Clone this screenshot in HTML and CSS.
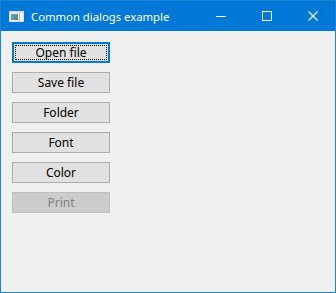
FILE: index.html
```html
<!DOCTYPE html>
<html>
<head>
<meta charset="utf-8">
<link rel="stylesheet" href="styles.css">
</head>
<body>
<div class="window">
  <div class="titlebar">
    <svg class="appicon" width="15" height="11" viewBox="0 0 15 11">
      <rect x="0" y="0" width="15" height="11" fill="#dcdcdc"/>
      <rect x="1" y="2" width="13" height="8" fill="#f4f4f4"/>
      <defs>
        <linearGradient id="g" x1="0" y1="0" x2="1" y2="1">
          <stop offset="0" stop-color="#6fa9c9"/>
          <stop offset="1" stop-color="#3f8a5c"/>
        </linearGradient>
      </defs>
      <rect x="2" y="3" width="7" height="6" fill="url(#g)"/>
      <rect x="10" y="2" width="1" height="8" fill="#b0b0b0"/>
    </svg>
    <span class="title">Common dialogs example</span>
    <div class="controls">
      <div class="ctl">
        <svg width="10" height="10" viewBox="0 0 10 10"><rect x="0" y="5" width="10" height="1" fill="#fff"/></svg>
      </div>
      <div class="ctl">
        <svg width="10" height="10" viewBox="0 0 10 10"><rect x="0.5" y="0.5" width="9" height="9" fill="none" stroke="#fff"/></svg>
      </div>
      <div class="ctl">
        <svg width="10" height="10" viewBox="0 0 10 10"><path d="M0.5 0.5 L9.5 9.5 M9.5 0.5 L0.5 9.5" stroke="#fff" stroke-width="1.1"/></svg>
      </div>
    </div>
  </div>
  <div class="client">
    <button class="btn default"><span class="focus">Open file</span></button>
    <button class="btn">Save file</button>
    <button class="btn">Folder</button>
    <button class="btn">Font</button>
    <button class="btn">Color</button>
    <button class="btn" disabled>Print</button>
  </div>
</div>
</body>
</html>
```
FILE: styles.css
```css
html, body {
  margin: 0;
  padding: 0;
  width: 336px;
  height: 293px;
  overflow: hidden;
}
.window {
  box-sizing: border-box;
  width: 336px;
  height: 293px;
  border: 1px solid #1883d7;
  background: #f0f0f0;
  display: flex;
  flex-direction: column;
  font-family: "Noto Sans", "Open Sans", sans-serif;
}
.titlebar {
  height: 30px;
  background: #0078d7;
  display: flex;
  align-items: center;
  color: #fff;
  flex: none;
}
.appicon {
  margin-left: 8px;
  margin-top: 1px;
}
.title {
  margin-left: 7px;
  font-size: 11.3px;
  margin-top: 1px;
}
.controls {
  margin-left: auto;
  display: flex;
  height: 30px;
}
.ctl {
  width: 46px;
  height: 30px;
  display: flex;
  align-items: center;
  justify-content: center;
}
.ctl:last-child {
  width: 45px;
}
.client {
  flex: 1;
  padding: 11px 0 0 11px;
  display: flex;
  flex-direction: column;
  align-items: flex-start;
  gap: 9px;
}
.btn {
  box-sizing: border-box;
  width: 98px;
  height: 21px;
  margin: 0;
  padding: 0;
  background: #e1e1e1;
  border: 1px solid #adadad;
  font-family: "Noto Sans", "Open Sans", sans-serif;
  font-size: 12px;
  color: #000;
  display: flex;
  align-items: center;
  justify-content: center;
  line-height: 1;
}
.btn.default {
  border: 2px solid #0078d7;
  padding: 1px;
}
.focus {
  box-sizing: border-box;
  width: 100%;
  height: 100%;
  border: 1px dotted #000;
  display: flex;
  align-items: center;
  justify-content: center;
}
.btn:disabled {
  background: #cccccc;
  border-color: #bfbfbf;
  color: #838383;
}
```
